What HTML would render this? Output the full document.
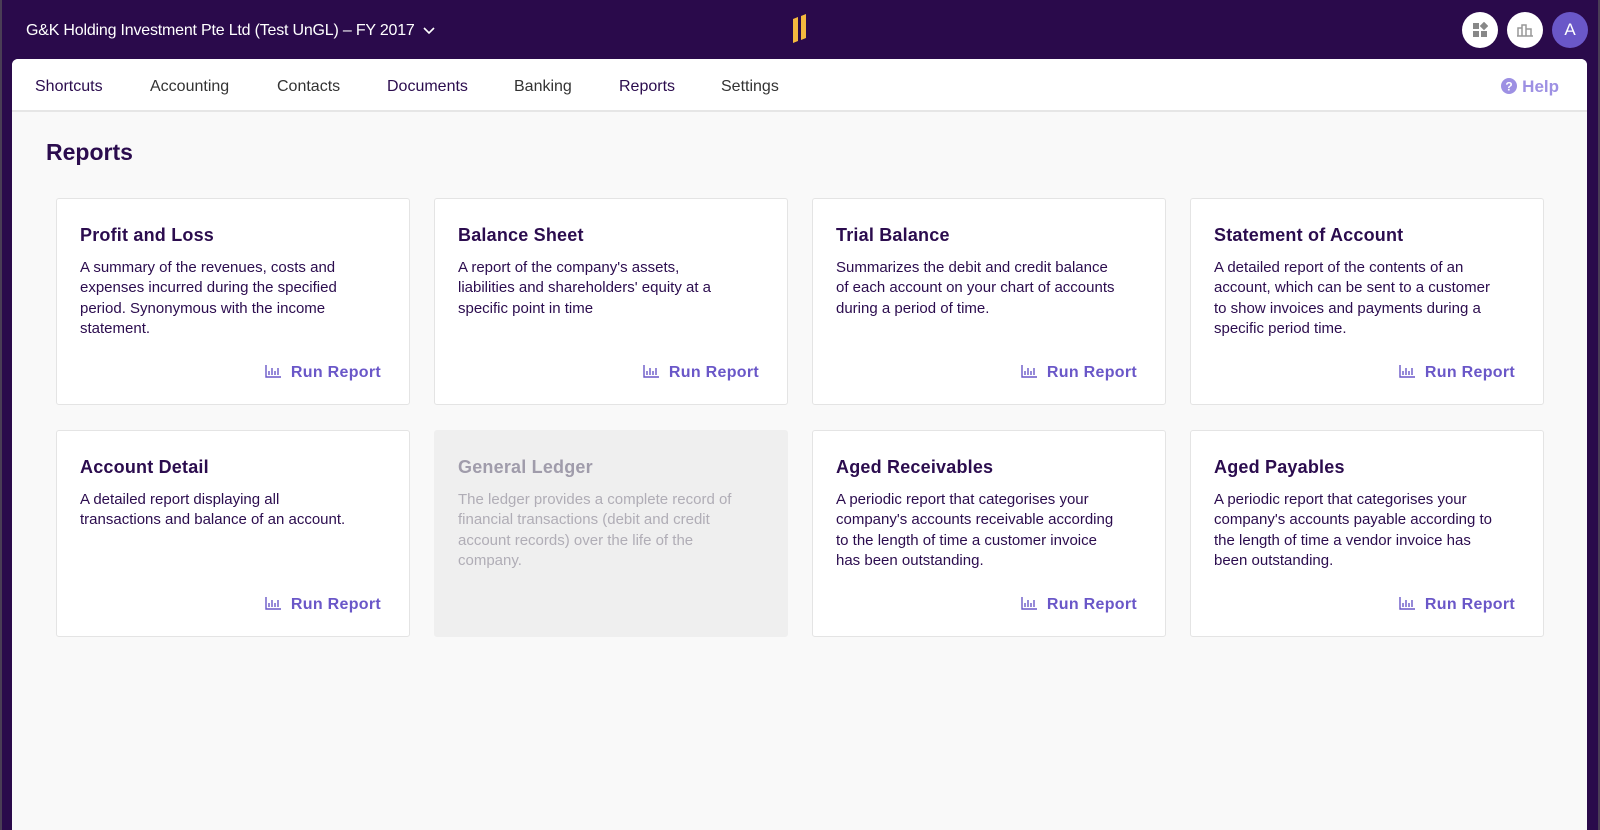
<!DOCTYPE html>
<html><head><meta charset="utf-8"><style>
*{box-sizing:border-box;margin:0;padding:0}
body{width:1600px;height:830px;overflow:hidden;background:#2a0a4b;font-family:"Liberation Sans",sans-serif;position:relative}
.edgeL{position:absolute;left:0;top:0;width:2px;height:830px;background:#4a3d55}
.edgeR{position:absolute;right:0;top:0;width:2px;height:830px;background:#4a3d55}
.title{position:absolute;left:26px;top:22px;color:#fff;font-size:16px;letter-spacing:-0.2px}
.logo{position:absolute;left:790px;top:13px}
.circ{position:absolute;top:12px;width:36px;height:36px;border-radius:50%;background:#fff;display:flex;align-items:center;justify-content:center}
.panel{position:absolute;left:12px;top:59px;width:1575px;height:771px;background:#f9f9f9;border-radius:6px 6px 0 0;overflow:hidden}
.nav{height:53px;background:#fff;border-bottom:2px solid #e6e6e6;position:relative}
.nav span{position:absolute;top:19px;font-size:16px;color:#333}
.nav .p{color:#2b0c4e}
.help{position:absolute;right:28px;top:18px;color:#9d90e3;font-size:17px;font-weight:bold}
h1{position:absolute;left:34px;top:80px;font-size:23px;color:#2b0c4e;font-weight:bold}
.card{position:absolute;width:354px;height:207px;background:#fff;border:1px solid #e4e4e4;border-radius:3px;padding:0 23px}
.card h2{margin-top:26px;font-size:18px;color:#2b0c4e;font-weight:bold;letter-spacing:0.2px}
.card p{margin-top:12px;font-size:15px;line-height:20.4px;color:#2b0c4e}
.run{position:absolute;right:28px;top:165px;font-size:16px;font-weight:bold;color:#6a57c8;letter-spacing:0.3px}
.run svg{vertical-align:-1px;margin-right:10px}
.dis{background:#efefef;border-color:#efefef}
.dis h2{color:#a09cab}.dis p{color:#b0adb6}
</style></head><body>
<div class="edgeL"></div><div class="edgeR"></div>
<div class="title">G&amp;K Holding Investment Pte Ltd (Test UnGL) – FY 2017 &nbsp;<svg width="12" height="8" viewBox="0 0 12 8"><path d="M1 1l5 5 5-5" stroke="#fff" stroke-width="1.6" fill="none"/></svg></div>
<svg class="logo" width="20" height="32" viewBox="0 0 20 32"><path d="M3 6l5-2v24l-5 2z" fill="#f4b93e"/><path d="M11 3l5-2v24l-5 2z" fill="#f4b93e"/></svg>
<div class="circ" style="left:1462px"><svg width="16" height="16" viewBox="0 0 16 16" fill="#888"><rect x="1" y="1" width="6" height="6"/><rect x="9" y="1" width="6" height="6" transform="rotate(45 12 4)"/><rect x="1" y="9" width="6" height="6"/><rect x="9" y="9" width="6" height="6"/></svg></div>
<div class="circ" style="left:1507px"><svg width="18" height="14" viewBox="0 0 18 14" fill="none" stroke="#999" stroke-width="1.5"><path d="M1 13h16M2 13V5h4v8M6 13V2h4v11M10 13V6h5v7"/></svg></div>
<div class="circ" style="left:1552px;background:#6a57c8;color:#fff;font-size:17px">A</div>
<div class="panel">
<div class="nav">
<span class="p" style="left:23px">Shortcuts</span><span style="left:138px">Accounting</span><span style="left:265px">Contacts</span><span class="p" style="left:375px">Documents</span><span style="left:502px">Banking</span><span class="p" style="left:607px">Reports</span><span style="left:709px">Settings</span>
<div class="help"><svg width="16" height="16" viewBox="0 0 16 16" style="vertical-align:-2px"><circle cx="8" cy="8" r="8" fill="#9d90e3"/><text x="8" y="12.5" text-anchor="middle" font-size="12" font-weight="bold" fill="#fff" font-family="Liberation Sans">?</text></svg> Help</div>
</div>
<h1>Reports</h1>
</div>
<div class="card" style="left:56px;top:198px"><h2>Profit and Loss</h2><p>A summary of the revenues, costs and<br>expenses incurred during the specified<br>period. Synonymous with the income<br>statement.</p><div class="run"><svg width="16" height="13" viewBox="0 0 16 13" fill="none" stroke="#6a57c8" stroke-width="1.4"><path d="M1 0v12h15M4 10V6M7 10V3M10 10V6M13 10V3"/></svg>Run Report</div></div>
<div class="card" style="left:434px;top:198px"><h2>Balance Sheet</h2><p>A report of the company's assets,<br>liabilities and shareholders' equity at a<br>specific point in time</p><div class="run"><svg width="16" height="13" viewBox="0 0 16 13" fill="none" stroke="#6a57c8" stroke-width="1.4"><path d="M1 0v12h15M4 10V6M7 10V3M10 10V6M13 10V3"/></svg>Run Report</div></div>
<div class="card" style="left:812px;top:198px"><h2>Trial Balance</h2><p>Summarizes the debit and credit balance<br>of each account on your chart of accounts<br>during a period of time.</p><div class="run"><svg width="16" height="13" viewBox="0 0 16 13" fill="none" stroke="#6a57c8" stroke-width="1.4"><path d="M1 0v12h15M4 10V6M7 10V3M10 10V6M13 10V3"/></svg>Run Report</div></div>
<div class="card" style="left:1190px;top:198px"><h2>Statement of Account</h2><p>A detailed report of the contents of an<br>account, which can be sent to a customer<br>to show invoices and payments during a<br>specific period time.</p><div class="run"><svg width="16" height="13" viewBox="0 0 16 13" fill="none" stroke="#6a57c8" stroke-width="1.4"><path d="M1 0v12h15M4 10V6M7 10V3M10 10V6M13 10V3"/></svg>Run Report</div></div>
<div class="card" style="left:56px;top:430px"><h2>Account Detail</h2><p>A detailed report displaying all<br>transactions and balance of an account.</p><div class="run"><svg width="16" height="13" viewBox="0 0 16 13" fill="none" stroke="#6a57c8" stroke-width="1.4"><path d="M1 0v12h15M4 10V6M7 10V3M10 10V6M13 10V3"/></svg>Run Report</div></div>
<div class="card dis" style="left:434px;top:430px"><h2>General Ledger</h2><p>The ledger provides a complete record of<br>financial transactions (debit and credit<br>account records) over the life of the<br>company.</p></div>
<div class="card" style="left:812px;top:430px"><h2>Aged Receivables</h2><p>A periodic report that categorises your<br>company's accounts receivable according<br>to the length of time a customer invoice<br>has been outstanding.</p><div class="run"><svg width="16" height="13" viewBox="0 0 16 13" fill="none" stroke="#6a57c8" stroke-width="1.4"><path d="M1 0v12h15M4 10V6M7 10V3M10 10V6M13 10V3"/></svg>Run Report</div></div>
<div class="card" style="left:1190px;top:430px"><h2>Aged Payables</h2><p>A periodic report that categorises your<br>company's accounts payable according to<br>the length of time a vendor invoice has<br>been outstanding.</p><div class="run"><svg width="16" height="13" viewBox="0 0 16 13" fill="none" stroke="#6a57c8" stroke-width="1.4"><path d="M1 0v12h15M4 10V6M7 10V3M10 10V6M13 10V3"/></svg>Run Report</div></div>
</body></html>
